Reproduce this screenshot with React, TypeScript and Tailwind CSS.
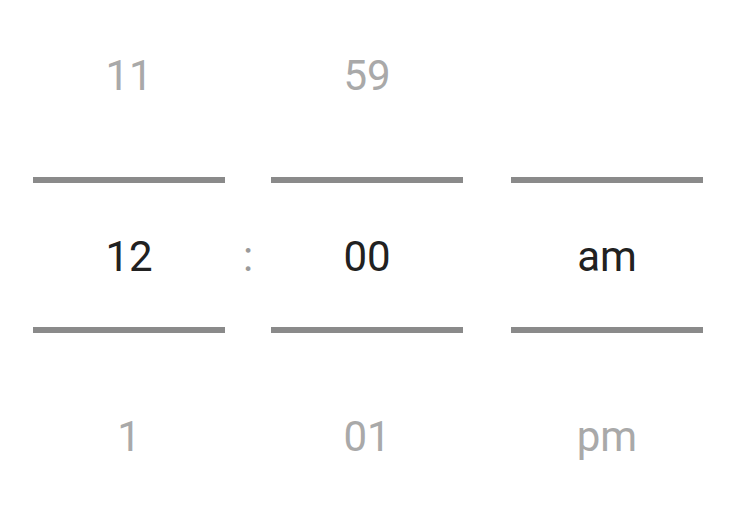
const hours = { prev: "11", cur: "12", next: "1" }
const minutes = { prev: "59", cur: "00", next: "01" }
const period = { prev: "", cur: "am", next: "pm" }

type Col = { prev: string; cur: string; next: string }

const Line = () => <div className="h-[6px] w-full bg-[#8a8a8a]" />

const Wheel = ({ col }: { col: Col }) => (
  <div className="flex w-[192px] flex-col">
    <div className="flex h-[152px] items-center justify-center text-[#a9a9a9]">{col.prev}</div>
    <div className="mt-[25px]">
      <Line />
    </div>
    <div className="flex h-[144px] items-center justify-center pt-[3px] text-[#212121]">{col.cur}</div>
    <Line />
    <div className="flex h-[182px] items-center justify-center pt-[25px] text-[#a9a9a9]">{col.next}</div>
  </div>
)

export default function App() {
  return (
    <div
      className="flex h-[515px] w-[736px] overflow-hidden bg-white pl-[33px] text-[42px] leading-none"
      style={{ fontFamily: "Roboto, 'Noto Sans', sans-serif" }}
    >
      <Wheel col={hours} />
      <div className="flex w-[46px] flex-col pt-[183px]">
        <div className="flex h-[144px] items-center justify-center pt-[3px] text-[#9a9a9a]">:</div>
      </div>
      <Wheel col={minutes} />
      <div className="w-[48px]" />
      <Wheel col={period} />
    </div>
  )
}
